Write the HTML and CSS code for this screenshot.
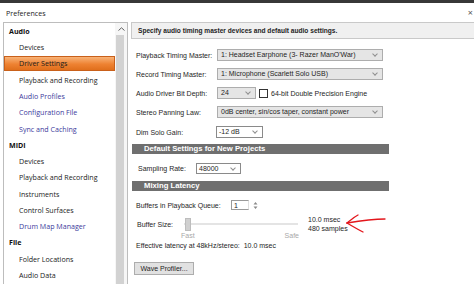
FILE: index.html
```html
<!DOCTYPE html>
<html lang="en">
<head>
    <meta charset="UTF-8">
    <meta name="viewport" content="width=device-width, initial-scale=1.0">
    <title>Preferences</title>
    <link rel="stylesheet" href="styles.css">
</head>

<body>
    <div class="topline"></div>
    <header class="titlebar">
        <span>Preferences</span>
        <span class="close">×</span>
    </header>

    <main class="window">
        <nav class="tree">
            <ul class="tree-list">
                <li class="group">Audio</li>
                <li class="item">Devices</li>
                <li class="item selected"><span>Driver Settings</span></li>
                <li class="item">Playback and Recording</li>
                <li class="item link">Audio Profiles</li>
                <li class="item link">Configuration File</li>
                <li class="item link">Sync and Caching</li>
                <li class="group">MIDI</li>
                <li class="item">Devices</li>
                <li class="item">Playback and Recording</li>
                <li class="item">Instruments</li>
                <li class="item">Control Surfaces</li>
                <li class="item link">Drum Map Manager</li>
                <li class="group">File</li>
                <li class="item">Folder Locations</li>
                <li class="item">Audio Data</li>
            </ul>
            <div class="scrollbar">
                <div class="scroll-up">
                    <svg width="7" height="4" viewBox="0 0 7 4"><path d="M0.5 3.5 L3.5 0.8 L6.5 3.5" fill="none" stroke="#606060" stroke-width="1"/></svg>
                </div>
                <div class="scroll-thumb"></div>
            </div>
        </nav>

        <section class="panel">
            <div class="panel-head">Specify audio timing master devices and default audio settings.</div>

            <div class="row row-first">
                <span class="label">Playback Timing Master:</span>
                <div class="combo combo-wide">1: Headset Earphone (3- Razer ManO'War)<i class="chev"></i></div>
            </div>
            <div class="row">
                <span class="label">Record Timing Master:</span>
                <div class="combo combo-wide">1: Microphone (Scarlett Solo USB)<i class="chev"></i></div>
            </div>
            <div class="row">
                <span class="label">Audio Driver Bit Depth:</span>
                <div class="combo combo-small">24<i class="chev"></i></div>
                <span class="check"></span>
                <span class="check-text">64-bit Double Precision Engine</span>
            </div>
            <div class="row">
                <span class="label">Stereo Panning Law:</span>
                <div class="combo combo-wide">0dB center, sin/cos taper, constant power<i class="chev"></i></div>
            </div>
            <div class="row row-dim">
                <span class="label">Dim Solo Gain:</span>
                <div class="combo combo-edit combo-dim">-12 dB<i class="chev"></i></div>
            </div>

            <div class="bar bar-first">Default Settings for New Projects</div>
            <div class="row row-rate">
                <span class="label-short">Sampling Rate:</span>
                <div class="combo combo-edit combo-rate">48000<i class="chev"></i></div>
            </div>

            <div class="bar bar-latency">Mixing Latency</div>
            <div class="row row-queue">
                <span class="label-queue">Buffers in Playback Queue:</span>
                <div class="spin-input">1</div>
                <div class="spin">
                    <svg width="5" height="9" viewBox="0 0 5 9"><path d="M0.5 3.5 L2.5 1 L4.5 3.5 Z M0.5 5.5 L2.5 8 L4.5 5.5 Z" fill="#8a8a8a"/></svg>
                </div>
            </div>
            <div class="row row-buffer">
                <span class="label-buffer">Buffer Size:</span>
                <div class="slider">
                    <div class="slider-track"></div>
                    <div class="slider-thumb"></div>
                </div>
                <div class="buffer-values">
                    <div>10.0 msec</div>
                    <div>480 samples</div>
                </div>
            </div>
            <div class="scale">
                <span>Fast</span>
                <span>Safe</span>
            </div>
            <div class="effective">Effective latency at 48kHz/stereo:&nbsp; 10.0 msec</div>
            <button type="button" class="profiler">Wave Profiler...</button>
        </section>
    </main>

    <svg class="note-arrow" width="44" height="26" viewBox="0 0 44 26">
        <path d="M2 12 C 14 10, 28 8, 40 8" fill="none" stroke="#e3161c" stroke-width="1.3" stroke-linecap="round"/>
        <path d="M2 12 C 6 9, 9 6, 13 4" fill="none" stroke="#e3161c" stroke-width="1.3" stroke-linecap="round"/>
        <path d="M2 12 C 7 15, 12 18, 18 21" fill="none" stroke="#e3161c" stroke-width="1.3" stroke-linecap="round"/>
    </svg>
</body>

</html>
```

FILE: styles.css
```css
body {
    margin: 0;
    width: 474px;
    height: 284px;
    overflow: hidden;
    position: relative;
    background: #ffffff;
    color: #1e1e1e;
    font-family: "Liberation Sans", Arial, sans-serif;
    font-size: 7px;
}

.topline {
    height: 3px;
    background: #383838;
}

.titlebar {
    height: 19px;
    display: flex;
    align-items: center;
    justify-content: space-between;
    padding: 0 0 0 6px;
    font-family: "Open Sans", sans-serif;
    font-size: 7.1px;
    color: #222;
}

.close {
    font-size: 9px;
    color: #555;
    margin-right: 1px;
}

.window {
    display: flex;
    height: 262px;
}

/* left tree */
.tree {
    margin-left: 3px;
    width: 125px;
    box-sizing: border-box;
    border: 1px solid #bdbdbd;
    border-bottom: none;
    display: flex;
}

.tree-list {
    flex: 1;
    list-style: none;
    margin: 0;
    padding: 0;
    font-family: "Open Sans", sans-serif;
    font-size: 7.1px;
}

.tree-list li {
    height: 16.27px;
    line-height: 16.27px;
    white-space: nowrap;
}

.group {
    padding-left: 5px;
    font-weight: bold;
    color: #111;
}

.item {
    padding-left: 15px;
    color: #222;
}

.link {
    color: #3d3a9c;
}

.selected {
    padding-left: 0 !important;
    display: flex;
    align-items: center;
}

.selected span {
    display: block;
    width: 95px;
    height: 13px;
    line-height: 13px;
    padding-left: 14px;
    background: linear-gradient(#f9b377, #ee8232 55%, #e06f1c);
    border: 1px solid #c9601a;
    color: #1a1a1a;
}

.scrollbar {
    width: 13px;
    display: flex;
    flex-direction: column;
    background: #f6f6f6;
}

.scroll-up {
    height: 12px;
    display: flex;
    align-items: center;
    justify-content: center;
}

.scroll-thumb {
    flex: 1;
    margin: 0 3px 0 1px;
    background: #d2d2d2;
}

/* right panel */
.panel {
    flex: 1;
    margin-left: 3px;
    min-width: 0;
}

.panel-head {
    height: 15px;
    line-height: 15px;
    margin-right: -10px;
    padding-left: 6px;
    background: #f0f0f0;
    border: 1px solid #c9c9c9;
    font-weight: bold;
    font-size: 6.6px;
    white-space: nowrap;
}

.row {
    display: flex;
    align-items: center;
    height: 12px;
    margin-top: 7px;
    padding-left: 5px;
    white-space: nowrap;
}

.row-first {
    margin-top: 10px;
}

.row-dim {
    margin-top: 8px;
}

.label {
    width: 81px;
    flex-shrink: 0;
}

.combo {
    position: relative;
    box-sizing: border-box;
    height: 12px;
    line-height: 10px;
    padding-left: 3px;
    background: #e5e5e5;
    border: 1px solid #adadad;
    overflow: hidden;
}

.combo-wide {
    width: 166px;
}

.combo-small {
    width: 39px;
}

.combo-edit {
    background: #ffffff;
    border-color: #8a8a8a;
    padding-left: 2px;
}

.combo-dim {
    width: 47px;
    margin-left: -1px;
}

.chev {
    position: absolute;
    right: 5px;
    top: 2px;
    width: 3px;
    height: 3px;
    border-right: 1px solid #8f8f8f;
    border-bottom: 1px solid #8f8f8f;
    transform: rotate(45deg);
}

.check {
    width: 7px;
    height: 7px;
    margin-left: 3px;
    border: 1px solid #333;
    background: #fff;
}

.check-text {
    margin-left: 3px;
}

.bar {
    height: 10px;
    line-height: 10px;
    width: 245px;
    margin-left: 1px;
    padding-left: 12px;
    background: #6f6f6f;
    color: #ffffff;
    font-weight: bold;
    font-size: 7.7px;
}

.bar-first {
    margin-top: 6px;
}

.row-rate {
    margin-top: 9px;
    height: 11px;
    padding-left: 7px;
}

.label-short {
    width: 58px;
}

.combo-rate {
    width: 45px;
    height: 11px;
}

.bar-latency {
    margin-top: 7px;
}

.row-queue {
    margin-top: 9px;
    height: 10px;
}

.label-queue {
    width: 95px;
}

.spin-input {
    box-sizing: border-box;
    width: 18px;
    height: 10px;
    line-height: 9px;
    padding-left: 2px;
    border: 1px solid #9a9a9a;
    border-right-color: #e0e0e0;
}

.spin {
    margin-left: 4px;
    display: flex;
}

.row-buffer {
    margin-top: 7px;
    height: 14px;
    padding-left: 6px;
}

.label-buffer {
    width: 47px;
}

.slider {
    position: relative;
    width: 114px;
    height: 12px;
}

.slider-track {
    position: absolute;
    left: 0;
    right: 0;
    top: 5px;
    height: 2px;
    background: #e4e4e4;
}

.slider-thumb {
    position: absolute;
    left: 1px;
    top: 0;
    width: 4px;
    height: 11px;
    background: #d0d0d0;
    border: 1px solid #bdbdbd;
}

.buffer-values {
    margin-left: 10px;
    line-height: 9px;
}

.scale {
    display: flex;
    justify-content: space-between;
    width: 118px;
    height: 8px;
    line-height: 8px;
    margin: 1px 0 0 50px;
    color: #a8a8a8;
}

.effective {
    height: 10px;
    line-height: 10px;
    margin-top: 1px;
    padding-left: 5px;
}

.profiler {
    display: block;
    margin: 11px 0 0 3px;
    width: 60px;
    height: 13px;
    padding: 0;
    background: #e1e1e1;
    border: 1px solid #adadad;
    font-family: "Liberation Sans", Arial, sans-serif;
    font-size: 7px;
    color: #1e1e1e;
}

.note-arrow {
    position: absolute;
    left: 345px;
    top: 211px;
}
```
